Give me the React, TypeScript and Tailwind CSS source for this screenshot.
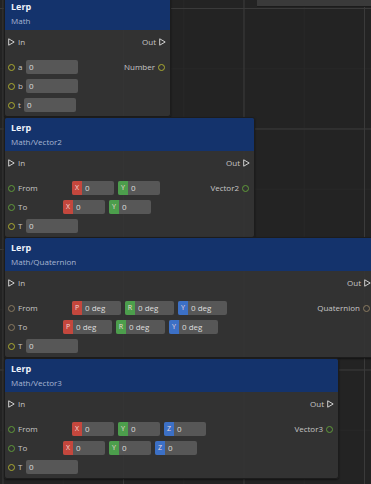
import React from "react";

type Tag = { t: string; c: string };
const RED = "bg-[#c4473d]";
const GREEN = "bg-[#4c9e4c]";
const BLUE = "bg-[#3c70c6]";

function Socket({ color }: { color: string }) {
  return <div className={`w-[7px] h-[7px] rounded-full border-[1.5px] shrink-0 ${color}`} />;
}

function Tri() {
  return (
    <svg width="7" height="8" viewBox="0 0 7 8" className="shrink-0">
      <path d="M0.7 0.8 L6.2 4 L0.7 7.2 Z" fill="none" stroke="#cfcfcf" strokeWidth="1" strokeLinejoin="round" />
    </svg>
  );
}

function Field({ w, value, tag }: { w: number; value: string; tag?: Tag }) {
  return (
    <div className="flex h-[14px] rounded-[2px] bg-[#575757] overflow-hidden shrink-0" style={{ width: w }}>
      {tag && (
        <div className={`w-[10px] h-full flex items-center justify-center text-[7px] text-[#f0d8d8] ${tag.c}`}>{tag.t}</div>
      )}
      <div className="pl-[3px] text-[8px] leading-[14px] text-[#dedede] whitespace-nowrap">{value}</div>
    </div>
  );
}

type Row = {
  label: string;
  labelW: number;
  sock: string;
  fields: { w: number; value: string; tag?: Tag }[];
  out?: { label: string; sock: string };
};

function Node({ top, width, sub, rows }: { top: number; width: number; sub: string; rows: Row[] }) {
  return (
    <div
      className="absolute left-[4px] rounded-[3px] border border-[#1c1c1c] bg-[#343434]/[0.93] shadow-[0_1px_2px_rgba(0,0,0,0.5)] overflow-hidden"
      style={{ top, width }}
    >
      <div className="h-[33px] bg-[#14336c] px-[6px] pt-[4px]">
        <div className="text-[9px] leading-[12px] font-bold text-[#eef2fa]">Lerp</div>
        <div className="mt-[2px] text-[8px] leading-[12px] text-[#a8b6d2]">{sub}</div>
      </div>
      <div className="pl-[3px] pr-[4px] pt-[6px] pb-[4px] text-[8px] text-[#c6c6c6]">
        <div className="h-[12px] flex items-center justify-between">
          <div className="flex items-center gap-[3px]">
            <Tri />
            <span className="leading-[12px]">In</span>
          </div>
          <div className="flex items-center gap-[3px]">
            <span className="leading-[12px]">Out</span>
            <Tri />
          </div>
        </div>
        {rows.map((r, i) => (
          <div key={i} className={`h-[14px] flex items-center justify-between ${i === 0 ? "mt-[12px]" : "mt-[5px]"}`}>
            <div className="flex items-center">
              <Socket color={r.sock} />
              <span className="ml-[3px] leading-[14px] whitespace-nowrap shrink-0" style={{ width: r.labelW }}>
                {r.label}
              </span>
              <div className="flex items-center gap-[4px]">
                {r.fields.map((f, j) => (
                  <Field key={j} {...f} />
                ))}
              </div>
            </div>
            {r.out && (
              <div className="flex items-center gap-[3px] pr-[1px]">
                <span className="leading-[14px]">{r.out.label}</span>
                <Socket color={r.out.sock} />
              </div>
            )}
          </div>
        ))}
      </div>
    </div>
  );
}

const Y_S = "border-[#aaaa30]";
const G_S = "border-[#5f9a3a]";
const Q_S = "border-[#8a7a60]";

export default function App() {
  const xyz = (vals: string[], tags: Tag[], w: number) => vals.map((v, i) => ({ w, value: v, tag: tags[i] }));
  const XYZ: Tag[] = [
    { t: "X", c: RED },
    { t: "Y", c: GREEN },
    { t: "Z", c: BLUE },
  ];
  const PRY: Tag[] = [
    { t: "P", c: RED },
    { t: "R", c: GREEN },
    { t: "Y", c: BLUE },
  ];
  return (
    <div
      className="relative w-[371px] h-[484px] overflow-hidden bg-[#232323] font-['Open_Sans',sans-serif] bg-[linear-gradient(to_right,#3a3a3a_1px,transparent_1px),linear-gradient(to_bottom,#3a3a3a_1px,transparent_1px),linear-gradient(to_right,#272727_1px,transparent_1px),linear-gradient(to_bottom,#272727_1px,transparent_1px)] bg-[size:120.5px_120.5px,120.5px_120.5px,60.25px_60.25px,60.25px_60.25px] bg-[position:2.5px_8px,2.5px_8px,2.5px_8px,2.5px_8px]"
    >
      <div className="absolute left-[257px] top-0 w-[114px] h-[7px] bg-[#3a3a3a] border-b border-[#1c1c1c]" />
      <Node
        top={-4}
        width={167}
        sub="Math"
        rows={[
          { label: "a", labelW: 8, sock: Y_S, fields: [{ w: 52, value: "0" }], out: { label: "Number", sock: Y_S } },
          { label: "b", labelW: 8, sock: Y_S, fields: [{ w: 52, value: "0" }] },
          { label: "t", labelW: 6, sock: Y_S, fields: [{ w: 52, value: "0" }] },
        ]}
      />
      <Node
        top={117}
        width={251}
        sub="Math/Vector2"
        rows={[
          { label: "From", labelW: 54, sock: G_S, fields: xyz(["0", "0"], XYZ, 42), out: { label: "Vector2", sock: G_S } },
          { label: "To", labelW: 45, sock: G_S, fields: xyz(["0", "0"], XYZ, 42) },
          { label: "T", labelW: 8, sock: Y_S, fields: [{ w: 52, value: "0" }] },
        ]}
      />
      <Node
        top={237}
        width={372}
        sub="Math/Quaternion"
        rows={[
          { label: "From", labelW: 54, sock: Q_S, fields: xyz(["0 deg", "0 deg", "0 deg"], PRY, 49), out: { label: "Quaternion", sock: Q_S } },
          { label: "To", labelW: 45, sock: Q_S, fields: xyz(["0 deg", "0 deg", "0 deg"], PRY, 49) },
          { label: "T", labelW: 8, sock: Y_S, fields: [{ w: 52, value: "0" }] },
        ]}
      />
      <Node
        top={358}
        width={335}
        sub="Math/Vector3"
        rows={[
          { label: "From", labelW: 54, sock: G_S, fields: xyz(["0", "0", "0"], XYZ, 42), out: { label: "Vector3", sock: G_S } },
          { label: "To", labelW: 45, sock: G_S, fields: xyz(["0", "0", "0"], XYZ, 42) },
          { label: "T", labelW: 8, sock: Y_S, fields: [{ w: 52, value: "0" }] },
        ]}
      />
    </div>
  );
}
